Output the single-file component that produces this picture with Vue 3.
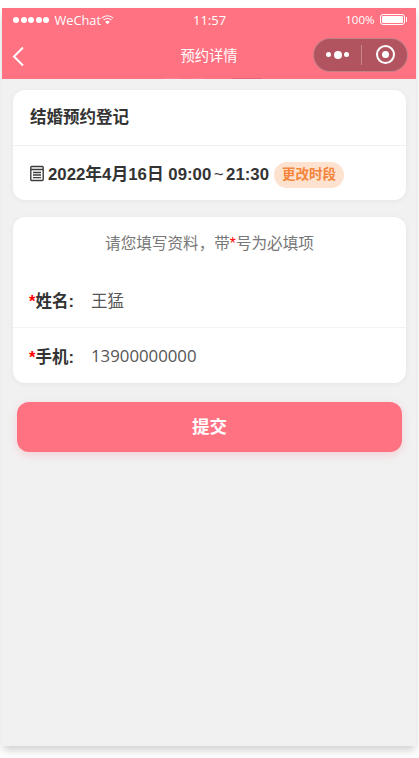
<script setup>
const dots = [1, 2, 3, 4, 5]
</script>

<template>
  <div class="page">
    <div class="phone">
      <header class="top">
        <div class="status">
          <div class="st-left">
            <span class="dots"><i v-for="d in dots" :key="d"></i></span>
            <span class="carrier">WeChat</span>
            <svg class="wifi" width="13" height="10" viewBox="0 0 13 10">
              <path d="M.8 3.2a8 8 0 0 1 11.4 0M2.6 5.2a5.4 5.4 0 0 1 7.8 0" fill="none" stroke="#fff" stroke-width="1.1" />
              <path d="M4.3 7a3 3 0 0 1 4.4 0L6.5 9.3z" fill="#fff" />
            </svg>
          </div>
          <span class="time">11:57</span>
          <div class="st-right">
            <span>100%</span>
            <span class="battery"><i></i></span>
            <span class="nub"></span>
          </div>
        </div>
        <nav class="nav">
          <svg class="back" width="13" height="21" viewBox="0 0 13 21">
            <path d="M11 1.5 2 10.5l9 9" fill="none" stroke="#fff" stroke-width="2" />
          </svg>
          <span class="title">预约详情</span>
          <div class="capsule">
            <div class="cap-dots"><i></i><b></b><i></i></div>
            <span class="cap-sep"></span>
            <span class="cap-ring"><i></i></span>
          </div>
          <span class="mark light m1"></span>
          <span class="mark light m2"></span>
          <span class="mark dark m3"></span>
        </nav>
      </header>

      <main class="content">
        <section class="card">
          <div class="row head">结婚预约登记</div>
          <div class="row slot">
            <svg class="cal" width="16" height="17" viewBox="0 0 16 17">
              <path d="M2.800 1.500h10.400a1 1 0 0 1 1 1v12a1 1 0 0 1-1 1H2.800a1 1 0 0 1-1-1v-12a1 1 0 0 1 1-1zM1.800 4.500h12.400M4 7.500h8M4 10h8M4 12.600h8" fill="none" stroke="#3c3c3c" stroke-width="1.400" />
            </svg>
            <span class="when">2022年4月16日 09:00<span class="tilde">~</span>21:30</span>
            <span class="tag">更改时段</span>
          </div>
        </section>

        <section class="card form">
          <p class="hint">请您填写资料，带<em>*</em>号为必填项</p>
          <div class="field line">
            <span class="label"><em>*</em>姓名:</span>
            <span class="value">王猛</span>
          </div>
          <div class="field">
            <span class="label"><em>*</em>手机:</span>
            <span class="value">13900000000</span>
          </div>
        </section>

        <button class="submit" type="button">提交</button>
      </main>
    </div>
  </div>
</template>

<style>
html, body { margin: 0; background: #fff; }
</style>

<style scoped>
.page {
  box-sizing: border-box;
  height: 758px;
  padding: 8px 3px 12px 2px;
  background: #fff;
  overflow: hidden;
}
.phone {
  height: 738px;
  background: #f1f1f1;
  box-shadow: 0 5px 9px -1px rgba(0, 0, 0, .2);
  font-family: "Liberation Sans", "Noto Sans CJK SC", sans-serif;
  display: flex;
  flex-direction: column;
}
.top { background: #ff7282; color: #fff; height: 71px; flex: none; }
.status {
  height: 23px;
  position: relative;
  display: flex;
  align-items: center;
  justify-content: space-between;
  padding: 0 9px 0 11px;
  font-size: 12.800px;
  font-family: "Open Sans", "Liberation Sans", sans-serif;
}
.st-left, .st-right { display: flex; align-items: center; }
.st-right { font-size: 11.500px; }
.dots { display: flex; gap: 1.600px; margin-right: 5px; }
.dots i { width: 6px; height: 6px; border-radius: 50%; background: #fff; }
.time { position: absolute; left: 191px; font-size: 13px; }
.battery {
  box-sizing: border-box;
  width: 25px;
  height: 11px;
  margin-left: 5px;
  padding: 1px;
  border: 1px solid #fff;
  border-radius: 3px;
  display: block;
}
.battery i { display: block; height: 100%; background: #fff; border-radius: 1px; }
.nub { width: 1.500px; height: 5px; margin-left: 1px; background: #fff; }
.nav { height: 48px; display: flex; align-items: center; position: relative; padding: 0 8px 0 10px; }
.back { flex: none; margin-top: 2px; }
.title {
  position: absolute;
  left: 0;
  right: 0;
  top: 15px;
  text-align: center;
  font-size: 14.250px;
  line-height: 20px;
}
.mark { position: absolute; bottom: 0; height: 1px; border-radius: 2px 2px 0 0; }
.light { background: rgba(255, 255, 255, .1); }
.dark { background: rgba(150, 40, 50, .2); }
.m1 { left: 161px; width: 16px; }
.m2 { left: 191px; width: 11px; }
.m3 { left: 230px; width: 30px; }
.capsule {
  margin-left: auto;
  box-sizing: border-box;
  width: 95px;
  height: 34px;
  margin-top: -1px;
  border: 1px solid rgba(255, 255, 255, .25);
  border-radius: 17px;
  background: #b25460;
  display: flex;
  align-items: center;
  position: relative;
  z-index: 1;
}
.cap-dots { width: 47px; display: flex; align-items: center; justify-content: center; gap: 2.500px; box-sizing: border-box; }
.cap-dots i { width: 5px; height: 5px; border-radius: 50%; background: #fff; }
.cap-dots b { width: 8px; height: 8px; border-radius: 50%; background: #fff; }
.cap-sep { width: 1px; height: 20px; background: rgba(255, 255, 255, .3); }
.cap-ring {
  box-sizing: border-box;
  width: 19px;
  height: 19px;
  margin-left: 14px;
  border: 2px solid #fff;
  border-radius: 50%;
  display: flex;
  align-items: center;
  justify-content: center;
}
.cap-ring i { width: 7px; height: 7px; border-radius: 50%; background: #fff; }
.content { padding: 11px 10px 0 11px; display: flex; flex-direction: column; }
.card {
  background: #fff;
  border-radius: 12px;
  box-shadow: 0 1px 6px rgba(0, 0, 0, .05);
}
.row { display: flex; align-items: center; box-sizing: border-box; padding-left: 17px; }
.head {
  height: 56px;
  padding-bottom: 3px;
  font-size: 16.500px;
  font-weight: 700;
  color: #333;
  border-bottom: 1px solid #f0f0f0;
}
.slot { height: 54px; color: #333; padding-left: 16px; }
.cal { flex: none; margin-right: 3px; }
.when { font-size: 16.800px; font-weight: 700; white-space: nowrap; }
.tilde { margin: 0 2.500px; font-weight: 400; }
.tag {
  margin-left: 5px;
  margin-top: 3px;
  width: 70px;
  height: 26px;
  border-radius: 13px;
  background: #fde2cf;
  color: #f5853a;
  font-size: 13.500px;
  font-weight: 700;
  line-height: 26px;
  text-align: center;
  flex: none;
}
.form { margin-top: 17px; }
.hint {
  margin: 0;
  height: 55px;
  line-height: 54px;
  text-align: center;
  font-size: 15.600px;
  color: #777;
}
em { color: #f00; font-style: normal; }
.field { height: 55px; display: flex; align-items: center; padding-left: 16px; }
.line { border-bottom: 1px solid #f3f3f3; box-sizing: content-box; }
.label { width: 62px; font-size: 16.500px; font-weight: 700; color: #333; flex: none; }
.value { font-size: 16.500px; color: #555; }
.field:last-child .value { font-family: "Open Sans", "Liberation Sans", sans-serif; font-size: 16.800px; }
.submit {
  margin: 19px 4px 0;
  height: 50px;
  padding: 0 0 4px;
  border: 0;
  border-radius: 12px;
  background: #ff7282;
  color: #fff;
  font: 700 17.500px "Liberation Sans", "Noto Sans CJK SC", sans-serif;
  box-shadow: 0 3px 8px rgba(255, 114, 130, .25);
}
</style>
